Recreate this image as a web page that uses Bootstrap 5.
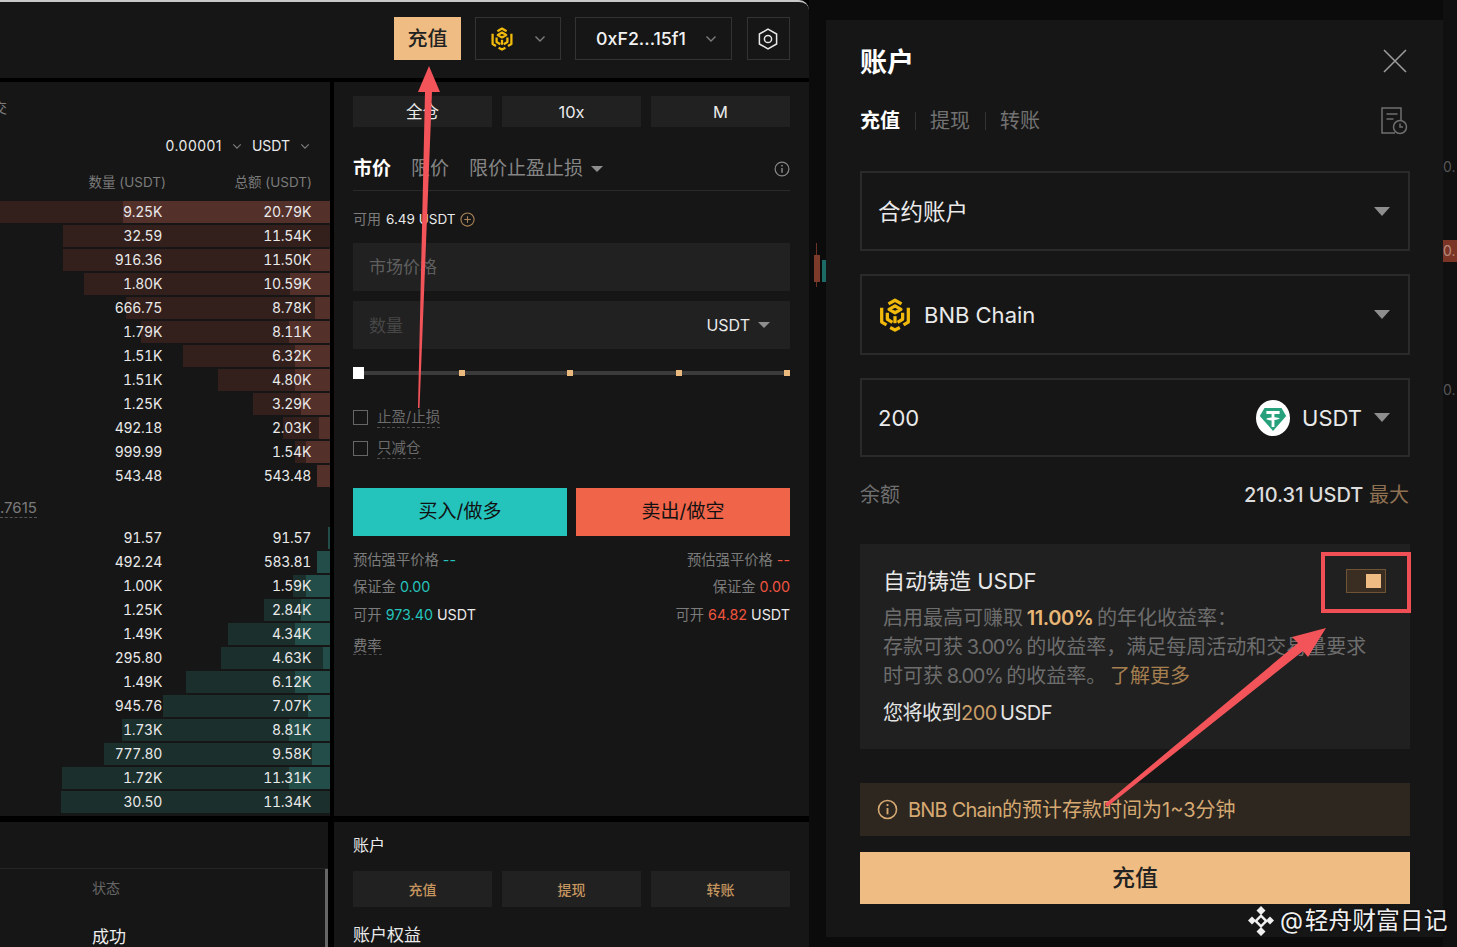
<!DOCTYPE html>
<html lang="zh-CN">
<head>
<meta charset="utf-8">
<title>充值</title>
<link href="https://cdn.jsdelivr.net/npm/bootstrap@5.3.0/dist/css/bootstrap.min.css" rel="stylesheet">
<style>
:root{--pan:#161616;--fld:#212121;--txt:#eaeaea;--mut:#7b7b7b;--gold:#efbd83;--teal:#24c3bc;--ora:#f0654a}
html,body{height:947px}
body{width:1457px;background:#0b0b0b;color:var(--txt);font-family:Inter,"Noto Sans CJK SC",sans-serif;font-size:14px;overflow:hidden;position:relative}
.left-col{width:809px;height:947px;flex:none;background:#000}
.top-bar{height:78px;background:var(--pan);border-top:2px solid #c9c9c9;border-top-right-radius:10px;padding:15px 19px 0 0;gap:14px}
.mid-sec{height:734px;margin-top:4px;gap:4px}
.book{width:330px;flex:none;background:var(--pan);padding-top:16px;overflow:hidden}
.cut-a{height:20px;line-height:20px;color:var(--mut);font-size:14px;width:7px;overflow:hidden;white-space:nowrap}
.cut-a span{display:inline-block;margin-left:-21px}
.book-tool{height:20px;margin-top:18px;padding-right:20px;font-size:14px;line-height:20px}
.book-tool span:first-child{letter-spacing:.45px}
.gp-t{margin-left:10px}
.book-head{height:20px;margin-top:16px;padding-right:18px;color:var(--mut);line-height:20px;font-size:13.5px}
.book-head .ob-tot{width:146px}
.ob-row{position:relative;height:22px;margin-bottom:2px;padding-right:19px;line-height:22px;font-size:14px;font-variant-numeric:tabular-nums;letter-spacing:-.3px}
.ob-row span{position:relative;z-index:1}
.ob-tot{width:149px;text-align:right}
.bar-a,.bar-b{position:absolute;right:0;top:0;bottom:0}
.ask .bar-a{background:#33201d}.ask .bar-b{background:#53302a}
.bid .bar-a{background:#1b2f2d}.bid .bar-b{background:#234d49}
.first-top{margin-top:9px}
.mid-px{height:20px;line-height:20px;margin:11px 0 9px;color:var(--mut);font-size:15px}
.mid-px span{border-bottom:1px dashed #555;display:inline-block;line-height:19px}
.order{width:475px;flex:none;background:var(--pan);padding:14px 19px 0}
.fld-btn{flex:1;height:31px;background:var(--fld);color:var(--txt);border:0;border-radius:0;padding:1px 0 0;font-size:16.5px;line-height:30px}
.fld-btn:hover{background:var(--fld);color:var(--txt)}
.tabs-o{height:40px;margin-top:24px;border-bottom:1px solid #2a2a2a;padding:1px 0 5px;gap:20px;font-size:19px;line-height:33px;color:#858585}
.tabs-o b{color:#fff}
.avail{height:20px;line-height:20px;margin-top:18px;font-size:14px;color:var(--mut);gap:5px}
.avail em{font-style:normal;color:var(--txt);font-size:13.5px}
.fld{height:48px;background:var(--fld);padding:1px 20px 0 16px;font-size:17px;color:#5f5f5f}
.fld-lab{padding-top:3px}
.fld-u{color:var(--txt);font-size:16px;padding-bottom:2px}
.slide{height:14px;margin-top:17px;position:relative}
.slide::before{content:"";position:absolute;left:0;right:0;top:5px;height:4px;background:#3b3b3b}
.thumb{position:relative;width:11px;height:12px;background:#fff;margin-right:-8px}
.dot{position:relative;width:6px;height:6px;background:#e9b97d}
.chk{height:22px;gap:9px;font-size:14.5px;color:#6c6c6c}
.chk i{display:block;width:15px;height:15px;border:1px solid #666}
.chk span{border-bottom:1px dashed #4d4d4d;line-height:20px}
.trade{flex:1;height:48px;border:0;border-radius:0;color:#111;font-size:19px;padding:1px 0 0}
.trade-b,.trade-b:hover{background:var(--teal);color:#111}
.trade-s,.trade-s:hover{background:#f0654a;color:#111}
.inf{height:20px;line-height:20px;font-size:14.3px;color:var(--mut)}
.c-t{color:var(--teal)}.c-o{color:#f0543f}.c-w{color:var(--txt)}
.fee span{border-bottom:1px dashed #4d4d4d}
.bot-sec{height:125px;margin-top:6px;gap:6px}
.bot-l{width:328px;flex:none;background:var(--pan);overflow:hidden}
.hr-l{height:47px;border-bottom:1px solid #262626}
.bot-list{padding:9px 0 0 92px;position:relative}
.bot-scroll{position:absolute;right:0;top:0;bottom:0;width:3px;background:#666}
.bot-r{width:475px;flex:none;background:var(--pan);padding:13px 19px 0}
.acc-btn{flex:1;height:36px;background:var(--fld);color:#c5955f;border:0;border-radius:0;padding:0;font-size:14px;font-weight:500}
.acc-btn:hover{background:var(--fld);color:#c5955f}
.gutter{width:17px;flex:none;position:relative}
.wick{position:absolute;left:7px;top:243px;width:1px;height:44px;background:#6c3226}
.red-c{position:absolute;left:5px;top:255px;width:6px;height:27px;background:#7c3a2b}
.teal-c{position:absolute;left:13px;top:260px;width:4px;height:22px;background:#1c6a66}
.panel-x{width:617px;flex:none;height:917px;margin-top:20px;background:var(--pan);padding:25px 33px 0 34px}
.m-title{height:36px;line-height:36px;font-size:27px;font-weight:700;color:#fff}
.m-close{margin-right:3px;margin-top:-4px}
.m-tabs{height:24px;margin-top:28px;font-size:20px;line-height:24px;color:#727272;gap:14.5px}
.m-tabs b{color:#fff}
.m-tabs i{display:block;width:1px;height:18px;background:#333}
.rec-ic{margin-right:2px}
.sel{border:2px solid #2a2a2a;padding:0 18px 0 16px;font-size:22.5px;color:var(--txt)}
.sel span{padding-top:2px}
.sel-sm{font-size:22px}
.bnb-lg{margin:0 12px 0 0}
.usdt-ic{margin-right:12px}
.usdt-tx{margin-right:12px}
.caret-d{display:block;width:0;height:0;border-style:solid;border-width:9px 8px 0;border-color:#8e8e8e transparent transparent}
.caret-s{display:block;width:0;height:0;border-style:solid;border-width:6px 6px 0;border-color:#8e8e8e transparent transparent}
.bal{height:28px;line-height:28px;margin-top:24px;font-size:20px;color:#6f6f6f;padding-right:1px}
.bal b{font-weight:500;color:#dcdcdc}
.bal em{font-style:normal;color:#8f7152}
.usdf{height:205px;margin-top:35px;background:#202020;padding:25px 20px 0 23px;position:relative}
.u-title{height:24px;line-height:24px;font-size:22px;color:#e8e8e8}
.u-desc{margin-top:11px;font-size:20px;line-height:29px;color:#6d6d6d;word-spacing:-2px}
.u-desc b{color:#e8b676;font-weight:600;letter-spacing:-.4px}
.u-desc a{color:#a67f50;text-decoration:none}
.pct{letter-spacing:-1.2px}
.u-get{margin-top:8px;font-size:20px;line-height:29px;color:#e4e4e4;letter-spacing:-.5px;word-spacing:-2px}
.u-get em{font-style:normal;color:#c99e68}
.switcher{position:absolute;left:486px;top:25px;width:40px;height:24px;background:#3a2e22;border:1px solid #6e5434;padding:4px 4px 4px 0}
.switcher i{display:block;width:15px;height:14px;background:var(--gold)}
.note{height:53px;margin-top:34px;background:#2d2720;padding-left:17px;gap:10px;font-size:20px;color:#d6a972}
.note-en{letter-spacing:-.8px}
.go{height:52px;margin-top:16px;width:100%;background:var(--gold);color:#222;border:0;border-radius:0;font-size:23px;font-weight:500;padding:0}
.go:hover{background:var(--gold);color:#222}
.go-top{width:67px;height:43px;background:var(--gold);color:#222;border:0;border-radius:0;font-size:20px;font-weight:500;padding:1px 0 0}
.go-top:hover{background:var(--gold);color:#222}
.tb-box{height:43px;border:1px solid #333;justify-content:center}
.tb-net{width:86px;gap:20px}
.tb-addr{width:157px;font-size:17.8px;font-weight:500;color:#f2f2f2;gap:19px;padding:1px 0 0 6px}
.tb-set{width:43px;margin-left:1px;padding-right:1px}
.edge{flex:1;position:relative;background:#101010;overflow:hidden}
.edge span{position:absolute;left:0;color:#555;font-size:14px}
.edge .hot{position:absolute;left:0;top:240px;right:0;height:22px;background:#7a3526;line-height:22px}
.edge .hot span{color:#b68a7e;top:0;line-height:22px}
.e-a{top:156px}.e-b{top:379px}
.overlay{position:absolute;left:0;top:0;z-index:5;pointer-events:none}
.hl-box{position:absolute;left:1321px;top:552px;width:90px;height:61px;border:4px solid #f04f55;z-index:5}
.mark-w{position:absolute;left:1247px;top:905px;z-index:6;font-size:23.8px;line-height:32px;color:#efefef;gap:5px;text-shadow:0 0 2px #000;word-spacing:-5px}
</style>
</head>
<body class="d-flex">
<svg width="0" height="0" class="position-absolute">
  <symbol id="bnb" viewBox="0 0 24 24">
    <g fill="none" stroke="#f0b90b" stroke-width="2.300" stroke-linejoin="round">
      <path d="M7.400 4.200 12 1.600l4.600 2.600"/>
      <path d="M7.800 8 12 5.600 16.200 8 12 10.400z"/>
      <path d="M2.600 6.800v10.200l3.400 2"/>
      <path d="M21.400 6.800v10.200l-3.400 2"/>
      <path d="M6.600 10.400v4.600l3.600 2.200"/>
      <path d="M17.400 10.400v4.600l-3.600 2.200"/>
      <path d="M12 12.800v5"/>
      <path d="M8.600 20.800 12 22.600l3.400-1.800"/>
    </g>
  </symbol>
  <symbol id="chev" viewBox="0 0 12 8"><path d="M1.500 1.500 6 6l4.500-4.500" fill="none" stroke="#7d7d7d" stroke-width="1.400"/></symbol>
  <symbol id="info" viewBox="0 0 20 20"><circle cx="10" cy="10" r="8.600" fill="none" stroke="currentColor" stroke-width="1.500"/><path d="M10 8.600v6" stroke="currentColor" stroke-width="1.800"/><circle cx="10" cy="5.800" r="1.100" fill="currentColor"/></symbol>
</svg>

<div class="left-col d-flex flex-column">
  <div class="top-bar d-flex justify-content-end">
    <button type="button" class="btn go-top">充值</button>
    <div class="tb-box tb-net d-flex align-items-center">
      <svg width="24" height="24"><use href="#bnb"/></svg>
      <svg width="12" height="8"><use href="#chev"/></svg>
    </div>
    <div class="tb-box tb-addr d-flex align-items-center">
      <span>0xF2...15f1</span>
      <svg width="12" height="8"><use href="#chev"/></svg>
    </div>
    <div class="tb-box tb-set d-flex align-items-center">
      <svg width="20" height="22" viewBox="0 0 20 22" fill="none" stroke="#e8e8e8" stroke-width="1.500"><path d="M10 1.200 18.600 6v10L10 20.800 1.400 16V6z"/><circle cx="10" cy="11" r="3.600"/></svg>
    </div>
  </div>

  <div class="mid-sec d-flex">
    <div class="book">
      <div class="cut-a"><span>成交</span></div>
      <div class="book-tool d-flex justify-content-end align-items-center">
        <span>0.00001</span><svg width="10" height="7" class="gp-t"><use href="#chev"/></svg>
        <span class="gp-t">USDT</span><svg width="10" height="7" class="gp-t"><use href="#chev"/></svg>
      </div>
      <div class="book-head d-flex justify-content-end"><span>数量 (USDT)</span><span class="ob-tot">总额 (USDT)</span></div>

      <div class="ob-row ask first-top d-flex justify-content-end"><i class="bar-a" style="width:330px"></i><i class="bar-b" style="width:207px"></i><span>9.25K</span><span class="ob-tot">20.79K</span></div>
      <div class="ob-row ask d-flex justify-content-end"><i class="bar-a" style="width:267px"></i><span>32.59</span><span class="ob-tot">11.54K</span></div>
      <div class="ob-row ask d-flex justify-content-end"><i class="bar-a" style="width:267px"></i><i class="bar-b" style="width:20px"></i><span>916.36</span><span class="ob-tot">11.50K</span></div>
      <div class="ob-row ask d-flex justify-content-end"><i class="bar-a" style="width:246px"></i><i class="bar-b" style="width:40px"></i><span>1.80K</span><span class="ob-tot">10.59K</span></div>
      <div class="ob-row ask d-flex justify-content-end"><i class="bar-a" style="width:204px"></i><i class="bar-b" style="width:15px"></i><span>666.75</span><span class="ob-tot">8.78K</span></div>
      <div class="ob-row ask d-flex justify-content-end"><i class="bar-a" style="width:189px"></i><i class="bar-b" style="width:41px"></i><span>1.79K</span><span class="ob-tot">8.11K</span></div>
      <div class="ob-row ask d-flex justify-content-end"><i class="bar-a" style="width:147px"></i><i class="bar-b" style="width:35px"></i><span>1.51K</span><span class="ob-tot">6.32K</span></div>
      <div class="ob-row ask d-flex justify-content-end"><i class="bar-a" style="width:112px"></i><i class="bar-b" style="width:35px"></i><span>1.51K</span><span class="ob-tot">4.80K</span></div>
      <div class="ob-row ask d-flex justify-content-end"><i class="bar-a" style="width:77px"></i><i class="bar-b" style="width:29px"></i><span>1.25K</span><span class="ob-tot">3.29K</span></div>
      <div class="ob-row ask d-flex justify-content-end"><i class="bar-a" style="width:47px"></i><i class="bar-b" style="width:11px"></i><span>492.18</span><span class="ob-tot">2.03K</span></div>
      <div class="ob-row ask d-flex justify-content-end"><i class="bar-a" style="width:35px"></i><i class="bar-b" style="width:24px"></i><span>999.99</span><span class="ob-tot">1.54K</span></div>
      <div class="ob-row ask d-flex justify-content-end"><i class="bar-b" style="width:13px"></i><span>543.48</span><span class="ob-tot">543.48</span></div>

      <div class="mid-px"><span>.7615</span></div>

      <div class="ob-row bid d-flex justify-content-end"><i class="bar-b" style="width:2px"></i><span>91.57</span><span class="ob-tot">91.57</span></div>
      <div class="ob-row bid d-flex justify-content-end"><i class="bar-b" style="width:13px"></i><span>492.24</span><span class="ob-tot">583.81</span></div>
      <div class="ob-row bid d-flex justify-content-end"><i class="bar-a" style="width:37px"></i><i class="bar-b" style="width:24px"></i><span>1.00K</span><span class="ob-tot">1.59K</span></div>
      <div class="ob-row bid d-flex justify-content-end"><i class="bar-a" style="width:66px"></i><i class="bar-b" style="width:29px"></i><span>1.25K</span><span class="ob-tot">2.84K</span></div>
      <div class="ob-row bid d-flex justify-content-end"><i class="bar-a" style="width:102px"></i><i class="bar-b" style="width:35px"></i><span>1.49K</span><span class="ob-tot">4.34K</span></div>
      <div class="ob-row bid d-flex justify-content-end"><i class="bar-a" style="width:109px"></i><i class="bar-b" style="width:7px"></i><span>295.80</span><span class="ob-tot">4.63K</span></div>
      <div class="ob-row bid d-flex justify-content-end"><i class="bar-a" style="width:144px"></i><i class="bar-b" style="width:35px"></i><span>1.49K</span><span class="ob-tot">6.12K</span></div>
      <div class="ob-row bid d-flex justify-content-end"><i class="bar-a" style="width:167px"></i><i class="bar-b" style="width:22px"></i><span>945.76</span><span class="ob-tot">7.07K</span></div>
      <div class="ob-row bid d-flex justify-content-end"><i class="bar-a" style="width:208px"></i><i class="bar-b" style="width:41px"></i><span>1.73K</span><span class="ob-tot">8.81K</span></div>
      <div class="ob-row bid d-flex justify-content-end"><i class="bar-a" style="width:226px"></i><i class="bar-b" style="width:18px"></i><span>777.80</span><span class="ob-tot">9.58K</span></div>
      <div class="ob-row bid d-flex justify-content-end"><i class="bar-a" style="width:268px"></i><i class="bar-b" style="width:41px"></i><span>1.72K</span><span class="ob-tot">11.31K</span></div>
      <div class="ob-row bid d-flex justify-content-end"><i class="bar-a" style="width:269px"></i><span>30.50</span><span class="ob-tot">11.34K</span></div>
    </div>

    <div class="order">
      <div class="d-flex" style="gap:10px">
        <button type="button" class="btn fld-btn">全仓</button>
        <button type="button" class="btn fld-btn">10x</button>
        <button type="button" class="btn fld-btn">M</button>
      </div>
      <div class="tabs-o d-flex align-items-center">
        <b>市价</b><span>限价</span>
        <span class="d-flex align-items-center gap-2">限价止盈止损<i class="caret-s"></i></span>
        <svg width="16" height="16" class="ms-auto" style="color:#8a8a8a"><use href="#info"/></svg>
      </div>
      <div class="avail d-flex align-items-center">
        <span>可用</span><em>6.49 USDT</em>
        <svg width="15" height="15" viewBox="0 0 16 16" fill="none" stroke="#a98458" stroke-width="1.200"><circle cx="8" cy="8" r="7"/><path d="M8 4.500v7M4.500 8h7"/></svg>
      </div>
      <div class="fld d-flex align-items-center" style="margin-top:14px">市场价格</div>
      <div class="fld d-flex align-items-center justify-content-between" style="margin-top:10px;color:#474747">
        <span class="fld-lab">数量</span>
        <span class="fld-u d-flex align-items-center gap-2">USDT<i class="caret-s"></i></span>
      </div>
      <div class="slide d-flex justify-content-between align-items-center">
        <i class="thumb"></i><i class="dot"></i><i class="dot"></i><i class="dot"></i><i class="dot"></i>
      </div>
      <div class="chk d-flex align-items-center" style="margin-top:26px"><i></i><span>止盈/止损</span></div>
      <div class="chk d-flex align-items-center" style="margin-top:9px"><i></i><span>只减仓</span></div>
      <div class="d-flex" style="gap:9px;margin-top:29px">
        <button type="button" class="btn trade trade-b">买入/做多</button>
        <button type="button" class="btn trade trade-s">卖出/做空</button>
      </div>
      <div class="inf d-flex justify-content-between" style="margin-top:14px"><span>预估强平价格 <span class="c-t">--</span></span><span>预估强平价格 <span class="c-o">--</span></span></div>
      <div class="inf d-flex justify-content-between" style="margin-top:7px"><span>保证金 <span class="c-t">0.00</span></span><span>保证金 <span class="c-o">0.00</span></span></div>
      <div class="inf d-flex justify-content-between" style="margin-top:8px"><span>可开 <span class="c-t">973.40</span> <span class="c-w">USDT</span></span><span>可开 <span class="c-o">64.82</span> <span class="c-w">USDT</span></span></div>
      <div class="inf fee" style="margin-top:11px"><span>费率</span></div>
    </div>
  </div>

  <div class="bot-sec d-flex">
    <div class="bot-l">
      <div class="hr-l"></div>
      <div class="bot-list h-100">
        <i class="bot-scroll"></i>
        <div style="height:20px;line-height:20px;color:#666">状态</div>
        <div style="height:24px;line-height:24px;margin-top:27px;font-size:17px;color:#eee">成功</div>
      </div>
    </div>
    <div class="bot-r">
      <div style="height:20px;line-height:20px;font-size:16px">账户</div>
      <div class="d-flex" style="gap:10px;margin-top:16px">
        <button type="button" class="btn acc-btn">充值</button>
        <button type="button" class="btn acc-btn">提现</button>
        <button type="button" class="btn acc-btn">转账</button>
      </div>
      <div style="height:20px;line-height:20px;margin-top:18px;font-size:17px">账户权益</div>
    </div>
  </div>
</div>

<div class="gutter"><i class="wick"></i><i class="red-c"></i><i class="teal-c"></i></div>

<div class="panel-x">
  <div class="m-title d-flex justify-content-between align-items-center">
    <span>账户</span>
    <svg width="24" height="24" viewBox="0 0 24 24" class="m-close" stroke="#9a9a9a" stroke-width="1.600"><path d="M1 1l22 22M23 1 1 23"/></svg>
  </div>
  <div class="m-tabs d-flex align-items-center">
    <b>充值</b><i></i><span>提现</span><i></i><span>转账</span>
    <svg width="28" height="30" viewBox="0 0 28 30" class="ms-auto rec-ic" fill="none" stroke="#6f6f6f" stroke-width="1.500"><path d="M15 27H2V2h19v12"/><path d="M6.500 8h11M6.500 13h7"/><circle cx="20" cy="21" r="6.500"/><path d="M20 17.500V21h3"/></svg>
  </div>
  <div class="sel d-flex align-items-center justify-content-between" style="height:80px;margin-top:38px"><span>合约账户</span><i class="caret-d"></i></div>
  <div class="sel sel-sm d-flex align-items-center" style="height:81px;margin-top:23px">
    <svg width="34" height="34" class="bnb-lg"><use href="#bnb"/></svg>
    <span>BNB Chain</span><i class="caret-d ms-auto"></i>
  </div>
  <div class="sel sel-sm d-flex align-items-center" style="height:79px;margin-top:23px">
    <span>200</span>
    <svg width="34" height="36" viewBox="0 0 36 36" class="ms-auto usdt-ic" preserveAspectRatio="none">
      <circle cx="18" cy="18" r="18" fill="#fff"/>
      <path d="M9 8h18l5 8-14 15L4 16z" fill="#26a17b"/>
      <path d="M11 11h14v3h-5.500v3.200c3 .2 5.500.8 5.500 1.400s-2.500 1.200-5.500 1.400V27h-3v-6.600c-3-.2-5.500-.8-5.500-1.400s2.500-1.200 5.500-1.400V14H11z" fill="#fff"/>
    </svg>
    <span class="usdt-tx">USDT</span><i class="caret-d"></i>
  </div>
  <div class="bal d-flex justify-content-between"><span>余额</span><span><b>210.31 USDT</b> <em>最大</em></span></div>
  <div class="usdf">
    <div class="u-title">自动铸造 USDF</div>
    <div class="switcher d-flex justify-content-end"><i></i></div>
    <div class="u-desc">启用最高可赚取 <b>11.00%</b> 的年化收益率：<br>存款可获 <span class="pct">3.00%</span> 的收益率，满足每周活动和交易量要求<br>时可获 <span class="pct">8.00%</span> 的收益率。 <a href="#">了解更多</a></div>
    <div class="u-get">您将收到<em>200</em> USDF</div>
  </div>
  <div class="note d-flex align-items-center">
    <svg width="21" height="21"><use href="#info"/></svg>
    <span><span class="note-en">BNB Chain</span>的预计存款时间为1~3分钟</span>
  </div>
  <button type="button" class="btn go">充值</button>
</div>

<div class="edge">
  <span class="e-a">0.</span>
  <div class="hot"><span>0.</span></div>
  <span class="e-b">0.</span>
</div>

<svg class="overlay" width="1457" height="947" viewBox="0 0 1457 947">
  <polygon points="418,408 419.500,408 432,92 440,92 429,66 418,92 425,92" fill="#f2545a"/>
  <polygon points="1105,804 1298,643 1292,637 1326,628 1308,657 1303,651 1107,807" fill="#f2545a"/>
</svg>
<div class="hl-box"></div>

<div class="mark-w d-flex align-items-center">
  <svg width="28" height="30" viewBox="0 0 28 30" fill="#f0f0f0"><path d="M14 0l4.500 4.500L14 9 9.500 4.500zM5 10.500l4 4-4 4-4-4zM23 10.500l4 4-4 4-4-4zM14 21l4.500 4.500L14 30l-4.500-4.500z"/><path d="M14 8l7 7-7 7-7-7zM14 11.500l-3.500 3.500 3.500 3.500 3.500-3.500z" fill-rule="evenodd"/></svg>
  <span>@ 轻舟财富日记</span>
</div>
</body>
</html>
